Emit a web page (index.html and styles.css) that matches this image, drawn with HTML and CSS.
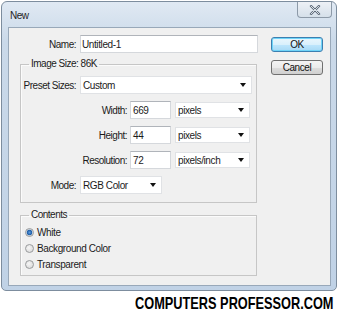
FILE: index.html
```html
<!DOCTYPE html>
<html lang="en">
  <head>
    <meta charset="UTF-8" />
    <title>New</title>
    <link rel="stylesheet" href="styles.css">
  </head>
  <body>
    <div class="window">
      <div class="titlebar">
        <span class="title">New</span>
        <div class="close-button">
          <svg width="12" height="10" viewBox="0 0 12 10">
            <path d="M2 1 L10 9 M10 1 L2 9" stroke="#5d6978" stroke-width="2.4" stroke-linecap="round" />
            <path d="M2 1 L10 9 M10 1 L2 9" stroke="#e9eef3" stroke-width="0.9" stroke-linecap="round" />
          </svg>
        </div>
      </div>

      <div class="client">
        <div class="main">
          <div class="row">
            <span class="label name-label">Name:</span>
            <div class="field name-field">Untitled-1</div>
          </div>

          <!-- Image size settings -->
          <fieldset class="group size-group">
            <legend>Image Size: 86K</legend>
            <div class="row">
              <span class="label short-label">Preset Sizes:</span>
              <div class="select preset-select"><span>Custom</span></div>
            </div>
            <div class="row dim-row">
              <span class="label dim-label">Width:</span>
              <div class="field dim-field">669</div>
              <div class="select unit-select"><span>pixels</span></div>
            </div>
            <div class="row dim-row">
              <span class="label dim-label">Height:</span>
              <div class="field dim-field">44</div>
              <div class="select unit-select"><span>pixels</span></div>
            </div>
            <div class="row dim-row">
              <span class="label dim-label">Resolution:</span>
              <div class="field dim-field">72</div>
              <div class="select unit-select"><span>pixels/inch</span></div>
            </div>
            <div class="row dim-row">
              <span class="label short-label">Mode:</span>
              <div class="select mode-select"><span>RGB Color</span></div>
            </div>
          </fieldset>

          <!-- Background contents -->
          <fieldset class="group contents-group">
            <legend>Contents</legend>
            <div class="radio-row"><span class="radio checked"></span>White</div>
            <div class="radio-row"><span class="radio"></span>Background Color</div>
            <div class="radio-row"><span class="radio"></span>Transparent</div>
          </fieldset>
        </div>

        <div class="buttons">
          <div class="button default-button">OK</div>
          <div class="button">Cancel</div>
        </div>
      </div>
    </div>

    <div class="credit"><span>COMPUTERS PROFESSOR.COM</span></div>
  </body>
</html>
```

FILE: styles.css
```css
/* basic styling */
* {
  margin: 0;
  padding: 0;
  box-sizing: border-box;
}
body {
  width: 341px;
  height: 313px;
  overflow: hidden;
  background-color: #ffffff;
  font-family: "Liberation Sans", Arial, sans-serif;
  color: #1b1b1b;
}

/* Window frame */
.window {
  margin: 1px 0 0 1px;
  width: 336px;
  height: 290px;
  padding: 0 5px 4px 6px;
  border: 1px solid #7d8d9e;
  border-radius: 6px 6px 5px 5px;
  background: linear-gradient(#e0e9f3, #cad9e9 40px, #c0d2e6);
}
.titlebar {
  display: flex;
  align-items: flex-start;
  height: 25px;
}
.title {
  margin: 8px 0 0 2px;
  font-size: 10px;
  line-height: 12px;
  letter-spacing: -0.5px;
  color: #1e1e1e;
}
.close-button {
  display: flex;
  align-items: center;
  justify-content: center;
  margin-left: auto;
  margin-right: -1px;
  width: 35px;
  height: 16px;
  border: 1px solid #8d9aa8;
  border-top: none;
  border-radius: 0 0 4px 4px;
  background: linear-gradient(#edf1f6, #d6e0ea);
}

/* Client area */
.client {
  display: flex;
  width: 323px;
  height: 259px;
  border: 1px solid #98a8b9;
  background-color: #f0f0f0;
}
.main {
  width: 249px;
  padding-top: 7px;
}
.row {
  display: flex;
  align-items: center;
  height: 18px;
}
.label {
  flex: none;
  font-size: 10px;
  letter-spacing: -0.5px;
  text-align: right;
}
.name-label {
  width: 67px;
  margin-right: 4px;
}
.short-label {
  width: 55px;
  margin-right: 4px;
}
.dim-label {
  width: 106px;
  margin-right: 3px;
}

/* Text boxes and drop downs */
.field,
.select {
  display: flex;
  align-items: center;
  height: 18px;
  padding-left: 2px;
  background-color: #ffffff;
  border: 1px solid #d5d8dc;
  border-top-color: #b0b4ba;
  font-size: 10px;
  letter-spacing: -0.4px;
}
.name-field {
  width: 178px;
  padding-left: 1px;
}
.dim-field {
  width: 41px;
  margin-right: 4px;
}
.select {
  justify-content: space-between;
  padding-right: 5px;
  border-color: #e0e2e5;
}
.select::after {
  content: "";
  border-left: 3px solid transparent;
  border-right: 3px solid transparent;
  border-top: 4px solid #111111;
}
.preset-select {
  width: 172px;
}
.unit-select {
  width: 75px;
  height: 16px;
}
.mode-select {
  width: 82px;
}
.dim-row {
  margin-top: 7px;
}

/* Group boxes */
.group {
  width: 237px;
  margin-left: 11px;
  border: 1px solid #c6c6c6;
  box-shadow: inset 1px 1px 0 #fbfbfb;
}
.group legend {
  margin-left: 8px;
  padding: 0 2px;
  font-size: 10px;
  line-height: 12px;
  letter-spacing: -0.5px;
}
.size-group {
  margin-top: 5px;
  padding: 6px 0 8px 0;
}
.contents-group {
  margin-top: 6px;
  padding: 3px 0 3px 0;
}
.radio-row {
  display: flex;
  align-items: center;
  height: 16px;
  padding-left: 4px;
  font-size: 10px;
  letter-spacing: -0.4px;
}
.radio {
  width: 9px;
  height: 9px;
  margin-right: 3px;
  border: 1px solid #999b9d;
  border-radius: 50%;
  background: radial-gradient(circle at 40% 40%, #f6f6f6, #d4d4d4);
}
.radio.checked {
  background: radial-gradient(circle, #5a9be0 0, #1f5ea6 2.4px, #dfe3e8 3.2px, #cfd3d8);
}

/* Dialog buttons */
.buttons {
  display: flex;
  flex-direction: column;
  gap: 8px;
  margin-left: 13px;
  padding-top: 9px;
}
.button {
  display: flex;
  align-items: center;
  justify-content: center;
  width: 52px;
  height: 15px;
  border: 1px solid #707070;
  border-radius: 3px;
  background: linear-gradient(#f4f4f4, #ebebeb 50%, #dddddd 51%, #d0d0d0);
  font-size: 10px;
  letter-spacing: -0.4px;
  color: #111111;
}
.default-button {
  border-color: #3c7fb1;
  background: linear-gradient(#eaf6fd, #d9f0fc 50%, #bee6fd 51%, #a7d9f5);
  box-shadow: inset 0 0 0 1px #6fd4f8;
}

/* Caption under the dialog */
.credit {
  margin-top: 4px;
  padding-right: 8px;
  text-align: right;
  font-size: 17px;
  line-height: 17px;
  font-weight: bold;
  color: #000000;
}
.credit span {
  display: inline-block;
  transform: scaleX(0.75);
  transform-origin: right center;
}
```
